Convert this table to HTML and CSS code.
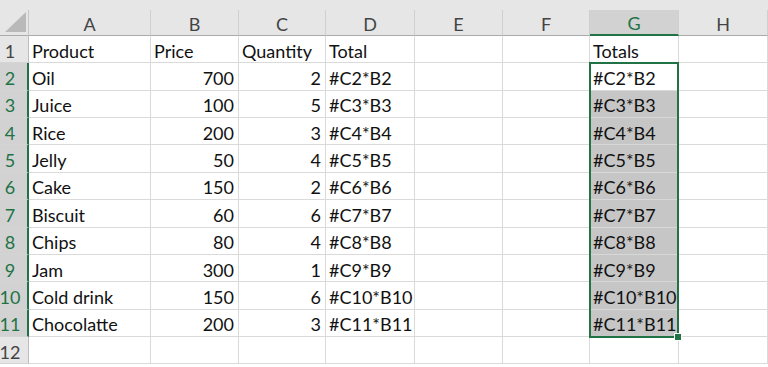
FILE: index.html
```html
<!DOCTYPE html>
<html lang="en">
  <head>
    <meta charset="UTF-8" />
    <meta name="viewport" content="width=device-width, initial-scale=1.0" />
    <title>Book1 - Totals</title>
    <link rel="stylesheet" href="styles.css">
  </head>
  <body>
    <div class="strip"></div>
    <div class="sheet">
      <!-- column headers -->
      <div class="corner">
        <svg width="21" height="20" viewBox="0 0 21 20"><polygon points="0,20 21,20 21,0" fill="#b9b9b9" /></svg>
      </div>
      <div class="col-head">A</div>
      <div class="col-head">B</div>
      <div class="col-head">C</div>
      <div class="col-head">D</div>
      <div class="col-head">E</div>
      <div class="col-head">F</div>
      <div class="col-head sel">G</div>
      <div class="col-head">H</div>

      <div class="row-head">1</div>
      <div class="cell">Product</div>
      <div class="cell">Price</div>
      <div class="cell">Quantity</div>
      <div class="cell">Total</div>
      <div class="cell"></div>
      <div class="cell"></div>
      <div class="cell">Totals</div>
      <div class="cell"></div>

      <div class="row-head sel">2</div>
      <div class="cell">Oil</div>
      <div class="cell num">700</div>
      <div class="cell num">2</div>
      <div class="cell">#C2*B2</div>
      <div class="cell"></div>
      <div class="cell"></div>
      <div class="cell">#C2*B2</div>
      <div class="cell"></div>

      <div class="row-head sel">3</div>
      <div class="cell">Juice</div>
      <div class="cell num">100</div>
      <div class="cell num">5</div>
      <div class="cell">#C3*B3</div>
      <div class="cell"></div>
      <div class="cell"></div>
      <div class="cell hl">#C3*B3</div>
      <div class="cell"></div>

      <div class="row-head sel">4</div>
      <div class="cell">Rice</div>
      <div class="cell num">200</div>
      <div class="cell num">3</div>
      <div class="cell">#C4*B4</div>
      <div class="cell"></div>
      <div class="cell"></div>
      <div class="cell hl">#C4*B4</div>
      <div class="cell"></div>

      <div class="row-head sel">5</div>
      <div class="cell">Jelly</div>
      <div class="cell num">50</div>
      <div class="cell num">4</div>
      <div class="cell">#C5*B5</div>
      <div class="cell"></div>
      <div class="cell"></div>
      <div class="cell hl">#C5*B5</div>
      <div class="cell"></div>

      <div class="row-head sel">6</div>
      <div class="cell">Cake</div>
      <div class="cell num">150</div>
      <div class="cell num">2</div>
      <div class="cell">#C6*B6</div>
      <div class="cell"></div>
      <div class="cell"></div>
      <div class="cell hl">#C6*B6</div>
      <div class="cell"></div>

      <div class="row-head sel">7</div>
      <div class="cell">Biscuit</div>
      <div class="cell num">60</div>
      <div class="cell num">6</div>
      <div class="cell">#C7*B7</div>
      <div class="cell"></div>
      <div class="cell"></div>
      <div class="cell hl">#C7*B7</div>
      <div class="cell"></div>

      <div class="row-head sel">8</div>
      <div class="cell">Chips</div>
      <div class="cell num">80</div>
      <div class="cell num">4</div>
      <div class="cell">#C8*B8</div>
      <div class="cell"></div>
      <div class="cell"></div>
      <div class="cell hl">#C8*B8</div>
      <div class="cell"></div>

      <div class="row-head sel">9</div>
      <div class="cell">Jam</div>
      <div class="cell num">300</div>
      <div class="cell num">1</div>
      <div class="cell">#C9*B9</div>
      <div class="cell"></div>
      <div class="cell"></div>
      <div class="cell hl">#C9*B9</div>
      <div class="cell"></div>

      <div class="row-head sel">10</div>
      <div class="cell">Cold drink</div>
      <div class="cell num">150</div>
      <div class="cell num">6</div>
      <div class="cell">#C10*B10</div>
      <div class="cell"></div>
      <div class="cell"></div>
      <div class="cell hl">#C10*B10</div>
      <div class="cell"></div>

      <div class="row-head sel">11</div>
      <div class="cell">Chocolatte</div>
      <div class="cell num">200</div>
      <div class="cell num">3</div>
      <div class="cell">#C11*B11</div>
      <div class="cell"></div>
      <div class="cell"></div>
      <div class="cell hl">#C11*B11</div>
      <div class="cell"></div>

      <div class="row-head">12</div>
      <div class="cell"></div>
      <div class="cell"></div>
      <div class="cell"></div>
      <div class="cell"></div>
      <div class="cell"></div>
      <div class="cell"></div>
      <div class="cell"></div>
      <div class="cell"></div>

      <!-- selected range G2:G11 -->
      <div class="selection"><span class="fill-handle"></span></div>
    </div>
  </body>
</html>
```

FILE: styles.css
```css
body {
  margin: 0;
  background: #fff;
  font-family: Lato, "Open Sans", sans-serif;
  overflow: hidden;
}

.strip {
  height: 10px;
  background: #e6e6e6;
}

.sheet {
  position: relative;
  display: grid;
  grid-template-columns: 29px 122px 88px 87px 89px 88px 87px 89px 89px;
  grid-template-rows: 26px repeat(12, 27.36px);
}

.corner {
  background: #e6e6e6;
  border-right: 1px solid #c6c6c6;
  border-bottom: 1px solid #ababab;
  display: flex;
  align-items: flex-end;
  justify-content: flex-end;
  padding: 0 2px 3px 0;
}

.corner svg {
  display: block;
}

.col-head {
  background: #e6e6e6;
  border-right: 1px solid #cfcfcf;
  border-bottom: 1px solid #ababab;
  color: #444;
  font-size: 18px;
  display: flex;
  align-items: center;
  justify-content: center;
  padding-top: 2px;
}

.col-head.sel {
  background: #d2d2d2;
  color: #217346;
  border-bottom: 2px solid #217346;
}

.row-head {
  background: #e6e6e6;
  border-right: 1px solid #bdbdbd;
  border-bottom: 1px solid #d4d4d4;
  color: #444;
  font-size: 18px;
  display: flex;
  align-items: center;
  justify-content: center;
  padding: 3px 8px 0 0;
}

.row-head.sel {
  background: #d2d2d2;
  color: #217346;
  border-right: 2px solid #217346;
  padding-right: 7px;
}

.cell {
  border-right: 1px solid #dadada;
  border-bottom: 1px solid #dadada;
  color: #111;
  font-size: 18px;
  display: flex;
  align-items: center;
  padding: 3px 3px 0;
  white-space: nowrap;
  overflow: visible;
}

.cell.num {
  justify-content: flex-end;
  padding-right: 4px;
}

.cell.hl {
  background: #c6c6c6;
  border-bottom-color: #d8d8d8;
  overflow: hidden;
}

/* absolutely placed in its grid area so it stays out of auto-placement */
.selection {
  grid-column: 8 / 9;
  grid-row: 3 / 13;
  position: absolute;
  top: -1px;
  bottom: -1px;
  left: -1px;
  right: 0;
  border: 2px solid #217346;
  pointer-events: none;
}

.fill-handle {
  position: absolute;
  right: -5px;
  bottom: -5px;
  width: 6px;
  height: 6px;
  background: #217346;
  border: 1px solid #fff;
}
```
